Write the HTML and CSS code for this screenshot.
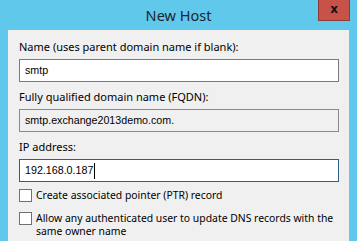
FILE: index.html
```html
<!DOCTYPE html>
<html>
<head>
<meta charset="utf-8">
<link rel="stylesheet" href="styles.css">
</head>
<body>
<div class="window">
  <div class="titlebar">
    <span></span>
    <span class="title">New Host</span>
    <span class="close">x</span>
  </div>
  <div class="panel">
    <div class="field">
      <div class="label">Name (uses parent domain name if blank):</div>
      <div class="input">smtp</div>
    </div>
    <div class="field">
      <div class="label">Fully qualified domain name (FQDN):</div>
      <div class="input disabled">smtp.exchange2013demo.com.</div>
    </div>
    <div class="field">
      <div class="label">IP address:</div>
      <div class="input focused">192.168.0.187<span class="caret"></span></div>
    </div>
    <div class="check">
      <span class="box"></span>
      <span class="ctext">Create associated pointer (PTR) record</span>
    </div>
    <div class="check">
      <span class="box"></span>
      <span class="ctext">Allow any authenticated user to update DNS records with the<br>same owner name</span>
    </div>
  </div>
</div>
</body>
</html>
```
FILE: styles.css
```css
html, body {
  margin: 0;
  padding: 0;
}
body {
  width: 357px;
  height: 241px;
  overflow: hidden;
  background: #5fc8eb;
  font-family: "Noto Sans", "Open Sans", sans-serif;
  color: #000;
}
.window {
  display: flex;
  flex-direction: column;
  height: 241px;
}
.titlebar {
  height: 30px;
  display: grid;
  grid-template-columns: 1fr auto 1fr;
  align-items: start;
}
.title {
  font-size: 14.5px;
  line-height: 30px;
  color: #1b2530;
}
.close {
  justify-self: end;
  margin-right: 7px;
  width: 32px;
  height: 21px;
  box-sizing: border-box;
  background: #c7524a;
  border: 1px solid #8e3a35;
  border-top: none;
  display: flex;
  align-items: center;
  justify-content: center;
  font-family: "DejaVu Sans", sans-serif;
  font-weight: bold;
  font-size: 12px;
  line-height: 1;
  color: #111;
  padding-bottom: 2px;
}
.panel {
  flex: 1;
  margin: 0 8px;
  background: #f0f0f0;
  padding: 9px 10px 0 11px;
  display: flex;
  flex-direction: column;
}
.field {
  display: flex;
  flex-direction: column;
  margin-bottom: 7px;
}
.field:last-of-type {
  margin-bottom: 9px;
}
.label {
  font-size: 11px;
  line-height: 16px;
  margin-bottom: 4px;
}
.input {
  height: 23px;
  box-sizing: border-box;
  border: 1px solid #7a7a7a;
  background: #fff;
  padding: 0 5px;
  font-family: "Liberation Sans", sans-serif;
  font-size: 10.7px;
  line-height: 21px;
  display: flex;
  align-items: center;
}
.input.disabled {
  background: #f0f0f0;
  border-color: #8a8a8a;
}
.input.focused {
  border-color: #2f5f86;
}
.caret {
  display: inline-block;
  width: 0;
  height: 16px;
  border-left: 1px solid #000;
  margin-left: 1px;
}
.check {
  display: flex;
  align-items: flex-start;
  gap: 4px;
  margin-bottom: 9px;
}
.box {
  flex: none;
  width: 13px;
  height: 13px;
  box-sizing: border-box;
  border: 1px solid #707070;
  background: #fff;
}
.ctext {
  font-size: 10.4px;
  line-height: 13.5px;
  white-space: nowrap;
}
```
